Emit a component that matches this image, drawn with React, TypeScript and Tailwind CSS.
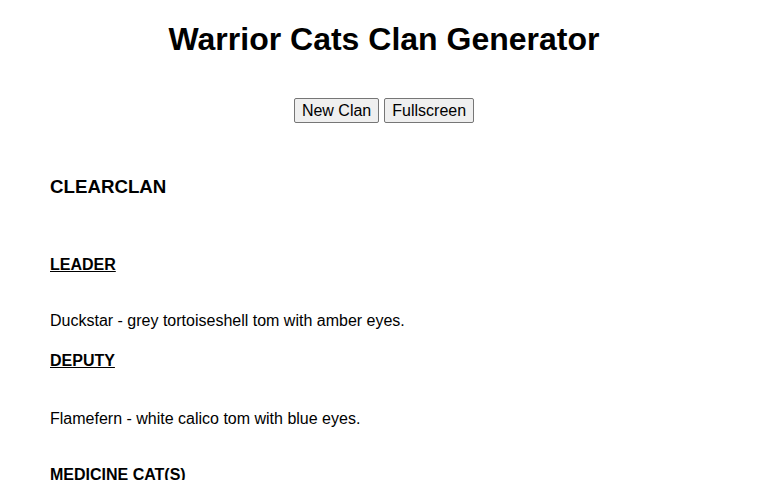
export default function App() {
  const font = { fontFamily: '"Liberation Sans", Arial, sans-serif' };

  return (
    <div className="w-full min-h-screen bg-white text-black" style={font}>
      <h1 className="mt-[21px] text-center text-[32px] leading-[37px] font-bold">
        Warrior Cats Clan Generator
      </h1>

      {/* Controls */}
      <div className="mt-[40px] flex justify-center gap-[5px]">
        <button className="h-[25px] px-[7px] text-[16px] leading-[18px] bg-[#efefef] border border-[#767676] rounded-[2px]">
          New Clan
        </button>
        <button className="h-[25px] px-[7px] text-[16px] leading-[18px] bg-[#efefef] border border-[#767676] rounded-[2px]">
          Fullscreen
        </button>
      </div>

      <div className="px-[50px]">
        <h3 className="mt-[53px] text-[18.72px] leading-[22px] font-bold">CLEARCLAN</h3>

        <h4 className="mt-[58px] text-[16px] leading-[18px] font-bold underline">LEADER</h4>
        <p className="mt-[38px] text-[16px] leading-[18px]">
          Duckstar - grey tortoiseshell tom with amber eyes.
        </p>

        <h4 className="mt-[22px] text-[16px] leading-[18px] font-bold underline">DEPUTY</h4>
        <p className="mt-[40px] text-[16px] leading-[18px]">
          Flamefern - white calico tom with blue eyes.
        </p>

        <h4 className="mt-[38px] text-[16px] leading-[18px] font-bold underline">MEDICINE CAT(S)</h4>
      </div>
    </div>
  );
}
